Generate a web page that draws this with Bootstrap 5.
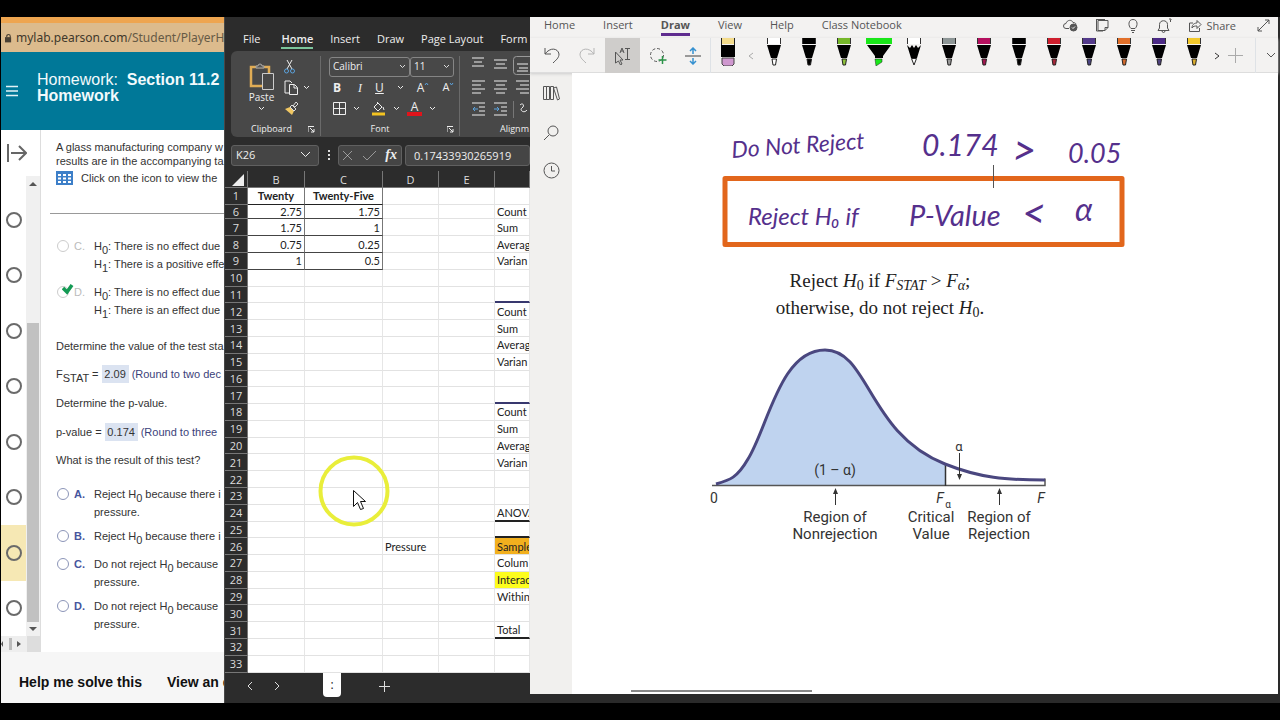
<!DOCTYPE html>
<html lang="en">
<head>
<meta charset="utf-8">
<meta name="viewport" content="width=device-width, initial-scale=1">
<title>Homework, workbook and notebook</title>
<link href="https://cdn.jsdelivr.net/npm/bootstrap@5.3.0/dist/css/bootstrap.min.css" rel="stylesheet">
<style>
body{background:#000;font-family:"Open Sans",sans-serif;font-size:12px}
button{padding:0;border:0;background:none;color:inherit;display:inline-flex;align-items:center;justify-content:center}
svg{display:block;flex:none}
.ln{fill:none;stroke:currentColor;stroke-width:1}
.desk{display:grid;grid-template-columns:minmax(0,224fr) minmax(0,306fr) minmax(0,750fr);min-height:100vh;padding:17px 0}
.desk>section{overflow:hidden;white-space:nowrap}
/* homework */
.hw{background:#fff;border-left:1px solid #000;color:#333;font-family:"Liberation Sans",Arial,sans-serif;font-size:11px;line-height:18px}
.url{border-top:6px solid #eea550;background:#dcbb8d;height:35px;font:12px "Noto Sans",sans-serif;color:#665a45}
.url b{font-weight:400;color:#40382b}
.banner{background:#007898;color:#f2fafc;height:78px;font-size:16px;line-height:16px}
.banner h1{font-size:inherit;line-height:inherit;font-weight:400;margin:0}
.rail{width:40px;border-right:1px solid #ddd;color:#666}
.exit{height:46px}
.sb{width:14px;background:#f0f0f0}
.thumb{background:#c1c1c1;width:12px;flex:1}
.step{width:26px}
.step.on{background:#f6e8b4}
.dot{width:16px;height:16px;border:2px solid #6a6a6a;border-radius:50%}
.q{padding:10px 0 0 15px}
.q p{margin-bottom:0}
.q hr{margin:25px 0 23px -6px;opacity:1;border-color:#999}
.q sub{font-size:11px;line-height:0;bottom:-4px}
.ans{background:#dbe3f1;border:0;padding:0;height:18px;text-align:center;font-size:11px;color:#333}
.hint{color:#3b3f7a}
.opt{display:flex}
.opt input{appearance:none;width:12px;height:12px;border:1px solid #8c95b8;border-radius:50%;margin:3px 5px 0 1px;flex:none}
.opt b{width:20px;color:#46559d}
.opt.off b{color:#bbb;font-weight:400}
.opt.off input{border-color:#ccc}
.mt6{margin-top:6px}.mt10{margin-top:10px}.mt11{margin-top:11px}.mt16{margin-top:16px}.mt18{margin-top:18px}
.tick{position:absolute;left:6px;top:0}
.foot{background:#f6f6f6;height:51px;color:#111;font-size:14px;font-weight:700;gap:25px;padding:0 0 8px 18px}
.foot button{font-weight:700}
/* workbook */
.xl{background:#2c2c2c;color:#eee;border-left:1px solid #484848}
.xl nav{height:34px;gap:17px;padding:13px 0 0 18px;line-height:17px;font-size:11px}
.xl nav a{color:#eee;text-decoration:none;flex:none}
.xl nav .on{font-weight:600;border-bottom:2px solid #7cc49b}
.ribbon{background:#484848;border-radius:6px 0 0 6px;margin-left:6px;height:86px;font-size:9px}
.grp{border-right:1px solid #6a6a6a;margin:5px 0 1px;position:relative;flex:none;display:flex;flex-direction:column;justify-content:space-between}
.grp:last-child{border:0}
.grp footer{text-align:center;line-height:14px;position:relative}
.grp footer svg{position:absolute;right:5px;top:4px}
.grow{display:flex;align-items:center;height:21px}
.ribbon select{appearance:none;color:#eee;border:1px solid #858585;border-radius:3px;height:20px;padding:0 3px;font-size:10px;background:#484848 url("data:image/svg+xml,%3Csvg xmlns='http://www.w3.org/2000/svg' width='7' height='5'%3E%3Cpath d='M1 1l2.5 2.5L6 1' fill='none' stroke='%23ddd'/%3E%3C/svg%3E") no-repeat right 3px center}
.fbar{height:20px;margin:8px 0 6px 6px;gap:3px;font-size:11px}
.fbar>*{flex-shrink:0}
.fbox{background:#454545;border:1px solid #606060;border-radius:3px;height:21px;color:#eee}
input.fbox{font-size:11px;padding:0 8px;min-width:0;flex:1 1 0}
.sheetwrap{position:relative;background:#fff;color:#222;font-family:Lato,sans-serif;font-size:11px}
.grid{table-layout:fixed;border-collapse:separate;border-spacing:0;width:100%;height:502px;line-height:13px}
.grid th,.grid td{padding:0 2px;overflow:hidden;border-right:1px solid #e6e6e6;border-bottom:1px solid #e2e2e2;height:16px}
.grid thead th,.grid tbody th{background:#2c2c2c;color:#ddd;font:11px/13px "Open Sans",sans-serif;text-align:center;border-color:#777}
.grid thead th{height:17px;padding-top:1px}
.grid .short>*{height:14px}
.grid td.n{text-align:right;border-right-color:#777;border-bottom-color:#444}
.grid td.h{text-align:center;font-weight:700;border-right-color:#777;border-bottom-color:#222}
.grid td.blue{border-bottom:2px solid #38386e}
.grid td.black{border-bottom:2px solid #222}
.ring{position:absolute;left:93px;top:282px}
.sheets{height:30px;color:#ddd}
.sheettab{background:#fff;width:18px;height:24px;border-radius:0 0 4px 4px;color:#222}
/* notebook */
.on-win{background:#2a2a2a;display:flex;flex-direction:column;padding:0 2px 9px 0;color:#555}
.bar{background:#f3f2f1}
.tabs{height:21px;font-size:11px;line-height:16px;padding:0 8px 0 14px;gap:28px}
.tabs a{color:#555;text-decoration:none;height:19px}
.tabs .on{font-weight:700;border-bottom:3px solid #5f2c8f;line-height:16px}
.status{gap:17px;height:17px}
.tools{height:35px;padding-left:5px;border-bottom:1px solid #ddd;box-shadow:0 1px 3px #ccc;position:relative}
.tools button{width:35px;height:35px;flex:none}
.tools .on{background:#cfcdcb}
.tools .slim{width:11px;color:#aaa}
.tools .pen{align-items:start}
.side{width:42px;background:#f1f0ee;padding-top:10px;gap:18px}
.page-area{background:#fff;position:relative;color:#222}
.ink{margin:38px 0 0 140px}
.ink text{fill:#55308c;font-family:Lato,sans-serif;font-style:italic}
.rule{margin:16px 0 0 200px;font:19px/27px "Liberation Serif",serif;text-align:center;width:216px}
.rule sub{font-size:14px;line-height:0;bottom:-3px}
.chart{margin:20px 0 0 128px}
.chart text{fill:#333;font-family:Roboto,sans-serif;font-size:15px;text-anchor:middle}
.hscroll{position:absolute;left:59px;bottom:2px;width:181px;height:2px;background:#888}
</style>
</head>
<body>
<main class="desk">

<section class="hw d-flex flex-column">
  <div class="url d-flex align-items-center ps-1">
    <svg width="7" height="10" viewBox="0 0 8 10" class="me-1"><path d="M2 4V3a2 2 0 014 0v1" fill="none" stroke="#4a4034" stroke-width="1.3"/><path d="M0 4h7v6H0z" fill="#4a4034"/></svg>
    <span><b>mylab.pearson.com</b>/Student/PlayerHo</span>
  </div>
  <header class="banner d-flex">
    <button aria-label="Menu" class="ms-1 me-3 h-100"><svg width="16" height="12" stroke="#e2f2f6" stroke-width="1.5"><path d="M1 1.5h12M1 6h12M1 10.500h12"/></svg></button>
    <h1 class="pt-3 mt-1">Homework:&nbsp; <b>Section 11.2<br>Homework</b></h1>
  </header>
  <div class="d-flex flex-fill">
    <div class="rail d-flex flex-column flex-shrink-0">
      <button class="exit" aria-label="Expand"><svg class="ln me-2" width="20" height="20"><path d="M1 1v18M4 10h14M12 3l7 7-7 7" stroke-width="2"/></svg></button>
      <div class="d-flex flex-fill">
        <div class="step d-flex flex-column pt-3" id="steps"></div>
        <div class="sb d-flex flex-column align-items-center">
          <svg width="8" height="147" fill="#555"><path d="M0 10l4-4 4 4z"/></svg><div class="thumb"></div><svg width="8" height="14" fill="#555"><path d="M0 5l4 4 4-4z"/></svg>
        </div>
      </div>
      <svg width="40" height="16" fill="#555"><path d="M0 0h40v16H0z" fill="#eee"/><path d="M26 0h14v16H26z" fill="#ddd"/><path d="M8 2h3v12H8z" fill="#bbb"/><path d="M2 5v6L0 8zM16 5v6l4-3z"/></svg>
    </div>
    <div class="q">
      <p style="line-height:14px">A glass manufacturing company w<br>results are in the accompanying ta</p>
      <div class="d-flex align-items-center" style="height:20px"><svg class="me-2" width="17" height="14"><path d="M0 0h17v14H0z" fill="#3d7fc8"/><path d="M2 3h3v2H2zm5 0h3v2H7zm5 0h3v2h-3zM2 6.500h3v2H2zm5 0h3v2H7zm5 0h3v2h-3zM2 10h3v2H2zm5 0h3v2H7zm5 0h3v2h-3z" fill="#fff"/></svg>Click on the icon to view the</div>
      <hr>
      <label class="opt off"><input type="radio" name="h" disabled><b>C.</b><span>H<sub>0</sub>: There is no effect due<br>H<sub>1</sub>: There is a positive effe</span></label>
      <label class="opt off mt10 position-relative"><input type="radio" name="h" disabled><svg class="tick" width="12" height="12"><path d="M1 5l4 4 5-7" fill="none" stroke="#149a54" stroke-width="3.500"/></svg><b>D.</b><span>H<sub>0</sub>: There is no effect due<br>H<sub>1</sub>: There is an effect due</span></label>
      <p class="mt18">Determine the value of the test sta</p>
      <p class="mt10">F<sub>STAT</sub> = <input class="ans" style="width:27px" aria-label="F stat" value="2.09"> <span class="hint">(Round to two dec</span></p>
      <p class="mt11">Determine the p-value.</p>
      <p class="mt11">p-value = <input class="ans" style="width:33px" aria-label="p-value" value="0.174"> <span class="hint">(Round to three</span></p>
      <p class="mt10">What is the result of this test?</p>
      <label class="opt mt16"><input type="radio" name="r"><b>A.</b><span>Reject H<sub>0</sub> because there i<br>pressure.</span></label>
      <label class="opt mt6"><input type="radio" name="r"><b>B.</b><span>Reject H<sub>0</sub> because there i</span></label>
      <label class="opt mt10"><input type="radio" name="r"><b>C.</b><span>Do not reject H<sub>0</sub> because<br>pressure.</span></label>
      <label class="opt mt6"><input type="radio" name="r"><b>D.</b><span>Do not reject H<sub>0</sub> because<br>pressure.</span></label>
    </div>
  </div>
  <div class="foot d-flex align-items-center"><button class="mt-3">Help me solve this</button><button class="mt-3">View an e</button></div>
</section>

<section class="xl">
  <nav class="d-flex align-items-start"><a href="#">File</a><a href="#" class="on ms-1">Home</a><a href="#">Insert</a><a href="#">Draw</a><a href="#">Page Layout</a><a href="#">Form</a></nav>
  <div class="ribbon d-flex">
    <div class="grp" style="width:90px">
      <div class="d-flex">
        <button class="flex-column ps-3" style="width:45px;font-size:10px;line-height:13px">
          <svg width="26" height="28" fill="none"><path d="M16 23H2V4h18v6" stroke="#e0ac55" stroke-width="2.500"/><path d="M7 5V3h2a2 2 0 014 0h2v2z" stroke="#aaa" fill="#555"/><path d="M13.500 10.500h11v16h-11z" stroke="#ccc" fill="#484848"/></svg>
          Paste<svg width="7" height="8" class="ln"><path d="M1 3l2.500 2.500L6 3"/></svg></button>
        <div class="d-flex flex-column ms-2">
          <button class="grow justify-content-start" aria-label="Cut"><svg width="12" height="14" class="ln"><path d="M3 0l5 9M8 0L3 9"/><g stroke="#5ba3de"><circle cx="2.500" cy="11" r="2"/><circle cx="8.500" cy="11" r="2"/></g></svg></button>
          <button class="grow justify-content-start" aria-label="Copy"><svg width="27" height="15" class="ln"><path d="M5 13H1V1h5l2 2M5.500 4.500h5l3 3v7h-8zM10 5v3h3M20 6l2.500 2.500L25 6"/></svg></button>
          <button class="grow justify-content-start" aria-label="Format painter"><svg width="14" height="13"><path d="M1 7l5-2 4 4-2 4z" fill="#f0c763"/><path d="M6 5l2-2 4 4-2 2zM9 4l3-4 2 2-3 3z" fill="none" stroke="#ddd"/></svg></button>
        </div>
      </div>
      <footer class="pe-2">Clipboard<svg class="ln" width="7" height="7"><path d="M0 6V.5h6M2 2l4 4M6 3v3H3"/></svg></footer>
    </div>
    <div class="grp ps-1" style="width:139px">
      <div>
        <div class="grow ps-1"><select aria-label="Font" style="width:81px"><option>Calibri</option></select><select aria-label="Size" style="width:44px"><option>11</option></select></div>
        <div class="grow ps-2" style="gap:13px;font-size:12px"><button><b>B</b></button><button class="ms-1"><i style="font-family:'Liberation Serif',serif">I</i></button><button><u>U</u></button><svg class="ln" width="7" height="5"><path d="M1 1l2.500 2.500L6 1"/></svg><button>A<svg class="ln" width="5" height="12"><path d="M1 3l1.500-2L4 3" stroke="#5ba3de"/></svg></button><button style="font-size:11px">A<svg class="ln" width="5" height="12"><path d="M1 1l1.500 2L4 1" stroke="#5ba3de"/></svg></button></div>
        <div class="grow ps-2" style="gap:7px"><button aria-label="Borders"><svg class="ln" width="13" height="13"><path d="M.5.5h12v12H.5zM6.500 0v13M0 6.500h13"/></svg></button><svg class="ln" width="7" height="5"><path d="M1 1l2.500 2.500L6 1"/></svg><button aria-label="Fill"><svg class="ln ms-1" width="15" height="15"><path d="M3 6l4-4 4 4-4 4zM6 1l3 3M12 6l1 3"/><path d="M1 13h13" stroke="#f3c321" stroke-width="3"/></svg></button><svg class="ln" width="7" height="5"><path d="M1 1l2.500 2.500L6 1"/></svg><button class="flex-column" style="font-size:12px;line-height:11px">A<svg width="15" height="4"><path d="M0 0h15v4H0z" fill="#e0141b"/></svg></button><svg class="ln" width="7" height="5"><path d="M1 1l2.500 2.500L6 1"/></svg></div>
      </div>
      <footer class="pe-4">Font<svg class="ln" width="7" height="7"><path d="M0 6V.5h6M2 2l4 4M6 3v3H3"/></svg></footer>
    </div>
    <div class="grp ps-2" style="width:100px">
      <svg class="ln ms-1" width="90" height="62"><path d="M0 2h12M2 6h8M0 10h12M22 4h13M24 8h9M22 12h13M45 8h11M47 12h9M45 15h11"/><rect x="41.500" y=".5" width="24" height="18" rx="3" stroke="#999"/><path d="M0 25h13M0 29h9M0 33h13M0 37h9M22 25h13M24 29h9M22 33h13M24 37h9M44 25h13M48 29h9M44 33h13M48 37h9M0 47h13M7 51h6M7 55h6M0 59h13M22 47h13M29 51h6M29 55h6M22 59h13M48 49c3-3 5 1 2 3s2 6 5 2"/><path d="M41.500 45v18" stroke="#777"/><path d="M6 53H1M3 51l-2 2 2 2M22 53h5M25 51l2 2-2 2" stroke="#5ba3de"/></svg>
      <footer class="text-start ps-4 ms-2">Alignm</footer>
    </div>
  </div>
  <div class="fbar d-flex align-items-center">
    <button class="fbox justify-content-between px-1" style="width:88px">K26<svg class="ln me-1" width="9" height="6"><path d="M0 0l4.500 4.500L9 0"/></svg></button>
    <svg width="13" height="10" fill="#ddd"><path d="M6 0h2v2H6zM6 4h2v2H6zM6 8h2v2H6z"/></svg>
    <div class="fbox d-flex align-items-center justify-content-around" style="width:64px"><svg class="ln" width="34" height="11" stroke-opacity=".5"><path d="M0 1l9 9M9 1l-9 9M20 6l4 4 9-9"/></svg><i style="font:italic bold 14px 'Liberation Serif',serif">fx</i></div>
    <input class="fbox" aria-label="Formula" value="0.17433930265919">
  </div>
  <div class="sheetwrap">
    <table class="grid">
      <colgroup><col style="width:23px"><col style="width:57px"><col style="width:78px"><col style="width:56px"><col style="width:56px"><col></colgroup>
      <thead><tr><th aria-label="Select all"><svg width="14" height="12" class="ms-auto"><path d="M13 0v12H1z" fill="#eee"/></svg></th><th>B</th><th>C</th><th>D</th><th>E</th><th></th></tr></thead>
      <tbody id="rows"></tbody>
    </table>
    <svg class="ring" width="72" height="74" fill="none"><circle cx="36" cy="38" r="33.500" stroke="#e9ee3a" stroke-width="4"/><path d="M35.500 37.500v16l4-4 3 7 3-1-3-7h5z" stroke="#111" fill="#fff"/></svg>
  </div>
  <div class="sheets d-flex align-items-start">
    <button class="ms-3 mt-2" aria-label="Previous" style="width:18px"><svg class="ln" width="6" height="10"><path d="M5 1L1 5l4 4"/></svg></button>
    <button class="ms-2 mt-2" aria-label="Next" style="width:20px"><svg class="ln" width="6" height="10"><path d="M1 1l4 4-4 4"/></svg></button>
    <button class="sheettab" style="margin-left:36px">:</button>
    <button class="mt-2" aria-label="Add sheet" style="margin-left:38px"><svg class="ln" width="11" height="11"><path d="M5.500 0v11M0 5.500h11"/></svg></button>
  </div>
</section>

<section class="on-win">
  <nav class="bar tabs d-flex"><a href="#">Home</a><a href="#">Insert</a><a href="#" class="on">Draw</a><a href="#">View</a><a href="#">Help</a><a href="#">Class Notebook</a>
    <div class="ms-auto d-flex align-items-center status">
      <svg class="ln" width="15" height="13"><path d="M6 9.500H3a2.500 2.500 0 010-5c1-4 6-4 7-1 2 0 3 1 3 2"/><circle cx="10.500" cy="8.500" r="3.500" fill="#555"/><path d="M9 8.500l1 1 2-2" stroke="#fff"/></svg>
      <svg class="ln" width="14" height="15"><path d="M3 2.500h10v7l-3 3H3zM13 9.500h-3v3M1.500 1v12H8M1 1.500h9"/></svg>
      <svg class="ln" width="14" height="16"><path d="M5 10.500C2 8 2 1.500 7 1.500s5 6.500 2 9zM5 12.500h4M6 14.500h2"/></svg>
      <svg class="ln" width="15" height="16"><path d="M1 12.500h11l-1.500-2.500V6.500c0-5-8-5-8 0V10zM5 13c0 2 3 2 3 0M12 1h2v1l-1 1 1 1"/></svg>
      <button class="gap-1"><svg class="ln" width="13" height="13"><path d="M4 4H.5v8.500h10V9M3 9c0-4 3-5 5-5V1.500l4 4-4 4V7C6 7 4 7 3 9z"/></svg>Share</button>
      <svg class="ln ms-1" width="13" height="13"><path d="M1 12L12 1M8 1h4v4M1 8v4h4"/></svg>
    </div>
  </nav>
  <div class="bar tools d-flex">
    <button aria-label="Undo"><svg class="ln" width="17" height="17"><path d="M1 1v6h6M1 7C6 0 14 1 15 7c0 4-3 6-6 9"/></svg></button>
    <button aria-label="Redo" style="color:#b5b5b5"><svg class="ln" width="17" height="17"><path d="M15 1v6H9M15 7C10 0 2 1 1 7c0 4 3 6 6 9"/></svg></button>
    <button class="on" aria-label="Select"><svg class="ln" width="18" height="18"><path d="M1.500 5v11l3-2 2 4 1.500-1-2-4h3zM6 6l2-5 2 5M6.500 4h3M11 1.500h5M13.500 1.500v11M11 12.500h5"/></svg></button>
    <button aria-label="Lasso"><svg class="ln" width="18" height="18"><circle cx="8" cy="8" r="6.500" stroke-dasharray="3 2"/><path d="M13.500 9v8M9.500 13h8" stroke="#2b9348" stroke-width="1.500"/></svg></button>
    <button aria-label="Insert space"><svg class="ln" width="16" height="18"><path d="M0 9h16" stroke="#999" stroke-width="2"/><path d="M8 1v6M5 4l3-3 3 3M8 17v-6M5 14l3 3 3-3" stroke="#3691d0" stroke-width="1.500"/></svg></button>
    <button aria-label="Eraser" class="border-start pen"><svg width="14" height="28"><path d="M0 0h14v6H0z" fill="#f4dc8c"/><path d="M0 7h14v12H0z" fill="#000"/><path d="M1 20h12v6l-2 2H3l-2-2z" fill="#cf98cf" stroke="#444"/><path d="M.5 0v7M13.500 0v7" stroke="#222"/></svg></button>
    <button class="slim" aria-label="Previous pens"><svg class="ln" width="6" height="8"><path d="M5 1L1 4l4 3"/></svg></button>
    <div class="d-flex" id="pens"></div>
    <button class="slim" aria-label="More pens" style="color:#333"><svg class="ln" width="6" height="8"><path d="M1 1l4 3-4 3"/></svg></button>
    <button aria-label="Add pen" style="width:27px;color:#aaa"><svg class="ln" width="15" height="15"><path d="M7.500 0v15M0 7.500h15"/></svg></button>
    <button class="ms-auto border-start" style="width:23px" aria-label="More"><svg class="ln ms-2" width="10" height="7"><path d="M1 1l4 4 4-4"/></svg></button>
  </div>
  <div class="d-flex flex-fill">
    <aside class="side d-flex flex-column align-items-center">
      <button aria-label="Notebooks" style="height:21px"><svg class="ln" width="17" height="15"><path d="M.5.5h3v13h-3zM3.500.5h3v13h-3zM7.500.5h3v13h-3zM10.500 2l3-1 3 12-2 1z"/></svg></button>
      <button aria-label="Search" style="height:21px"><svg class="ln" width="16" height="16"><circle cx="10" cy="6" r="5"/><path d="M6 10l-5 5"/></svg></button>
      <button aria-label="Recent" style="height:19px"><svg class="ln" width="17" height="17"><circle cx="8.500" cy="8.500" r="7.500"/><path d="M8.500 4v5H12"/></svg></button>
    </aside>
    <div class="page-area flex-fill">
      <svg class="ink" width="430" height="140">
        <rect x="13" y="67.500" width="397" height="66" fill="none" stroke="#e2661c" stroke-width="5" stroke-linejoin="round"/>
        <g font-size="23"><text x="20" y="47" transform="rotate(-4 20 47)">Do Not Reject</text><text x="210" y="45" font-size="30">0.174</text><text x="300" y="54" font-size="42">&gt;</text><text x="356" y="52" font-size="27">0.05</text>
        <text x="36" y="114" font-size="24">Reject H₀ if</text><text x="197" y="115" font-size="29">P-Value</text><text x="310" y="117" font-size="42">&lt;</text><text x="363" y="110" font-size="32">α</text></g>
        <path d="M281.500 54v23" stroke="#555"/>
      </svg>
      <p class="rule mb-0">Reject <i>H</i><sub>0</sub> if <i>F<sub>STAT</sub></i> &gt; <i>F<sub>α</sub></i>;<br>otherwise, do not reject <i>H</i><sub>0</sub>.</p>
      <svg class="chart" width="360" height="202">
        <path d="M16 143C30 139 37 137 48 118C68 86 80 9 125 9C169 9 168 93 245 123V144H16z" fill="#bfd3ef"/>
        <path d="M12 144.500h333v-7" fill="none" stroke="#555" stroke-width="1.500"/>
        <path d="M245.500 122v23" stroke="#333" stroke-width="1.500"/>
        <path d="M16 143C30 139 37 137 48 118C68 86 80 9 125 9C169 9 168 93 245 123C280 137 306 139 345 139" fill="none" stroke="#4a477f" stroke-width="3"/>
        <path d="M135.500 164v-15M299.500 164v-15M259.500 112v24" stroke="#333"/><path d="M133 153l2.500-6 2.500 6zM297 153l2.500-6 2.500 6zM257 133l2.500 6 2.500-6z" fill="#333"/>
        <text x="135" y="134" style="font-size:14px">(1 – α)</text><text x="259" y="110" style="font-size:13px">α</text><text x="14" y="162" style="font-size:14px">0</text><text x="240" y="162" font-style="italic" style="font-size:14px">F</text><text x="248" y="167" style="font-size:10px">α</text><text x="341" y="162" font-style="italic" style="font-size:14px">F</text>
        <text x="135" y="181">Region of</text><text x="135" y="198">Nonrejection</text><text x="231" y="181">Critical</text><text x="231" y="198">Value</text><text x="299" y="181">Region of</text><text x="299" y="198">Rejection</text>
      </svg>
      <div class="hscroll"></div>
    </div>
  </div>
</section>
</main>
<script>
const steps = document.getElementById('steps');
for (let i = 1; i <= 8; i++) steps.insertAdjacentHTML('beforeend', `<button class="flex-fill w-100${i === 7 ? ' on step' : ''}" aria-label="Question ${i}"><span class="dot"></span></button>`);

const B = {1:'Twenty',6:'2.75',7:'1.75',8:'0.75',9:'1'}, C = {1:'Twenty-Five',6:'1.75',7:'1',8:'0.25',9:'0.5'};
const F = {24:'ANOVA',26:'Sample',27:'Colum',28:'Interac',29:'Within',31:'Total'};
[6,12,18].forEach(s => ['Count','Sum','Averag','Varian'].forEach((t, i) => F[s + i] = t));
const line = {11:'blue',17:'blue',24:'black',25:'black',31:'black'}, fill = {26:'#f2b01e',28:'#fdfd1d'};
let html = '';
for (const r of [1, ...Array.from({length:28}, (_, i) => i + 6)]) {
  const k = r === 1 ? 'h' : B[r] ? 'n' : '';
  html += `<tr${r === 6 ? ' class="short"' : ''}><th scope="row">${r}</th><td class="${k}">${B[r] || ''}</td><td class="${k}">${C[r] || ''}</td><td>${r === 26 ? 'Pressure' : ''}</td><td></td><td class="${line[r] || ''}"${fill[r] ? ` style="background:${fill[r]}"` : ''}>${F[r] || ''}</td></tr>`;
}
document.getElementById('rows').innerHTML = html;

const pens = [['#fff','#fff'],['#000','#000'],['#76b82a','#8fc43c'],['#19e619','#19e619',1],['#fff','#fff'],['#8d9696','#999'],['#b5105f','#a3174f'],['#000','#000'],['#cf1f2e','#a8283a'],['#533a8b','#4b4583'],['#e2702a','#d46a2c'],['#4b2a86','#50437f'],['#f3c92b','#dcae2f']];
document.getElementById('pens').innerHTML = pens.map(([c, t, wide], i) => `<button class="pen" aria-label="Pen ${i + 1}">` + (wide
  ? `<svg width="26" height="28"><path d="M0 0h26v6H0z" fill="${c}"/><path d="M1 7h24l-8 11v2H9v-2z"/><path d="M9 21h7v3l-6 4z" fill="${t}" stroke="#222" stroke-width=".5"/></svg>`
  : `<svg width="14" height="28"><path d="M0 0h14v6H0z" fill="${c}"/><path d="M.5 0v6M13.500 0v6" stroke="#333"/><path d="${i === 4 ? 'M0 7l3 3 2-3 2 3 2-3 2 3 3-3-4 13H4z' : 'M0 7h14l-4 13H4z'}"/><path d="${i === 4 ? 'M4.500 20.500h5L7 27z' : 'M5 21h4.500L8.500 27h-2.500z'}" fill="${t}" stroke="#222"/></svg>`) + '</button>').join('');
</script>
<script src="https://cdn.jsdelivr.net/npm/bootstrap@5.3.0/dist/js/bootstrap.bundle.min.js"></script>
</body>
</html>
